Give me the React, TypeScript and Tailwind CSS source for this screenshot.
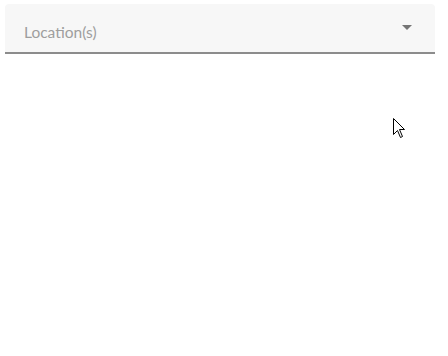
import React from 'react';

const Cursor: React.FC = () => (
  <svg
    className="absolute left-[393px] top-[118px]"
    width="13"
    height="21"
    viewBox="0 0 13 21"
  >
    <path
      d="M0.5 0.5 L0.5 16.5 L4.5 12.5 L7.5 19.5 L9.5 18.5 L6.5 11.5 L11.5 11.5 Z"
      fill="#ffffff"
      stroke="#000000"
      strokeWidth="1"
      strokeLinejoin="miter"
    />
  </svg>
);

export default function App() {
  return (
    <div className="relative w-[448px] h-[356px] bg-white" style={{ fontFamily: 'Lato, "Open Sans", sans-serif' }}>
      <div className="pl-[5px] pr-[13px] pt-[4px]">
        <div className="flex items-center h-[50px] bg-[#f7f7f7] rounded-t-[4px] border-b-2 border-[#8c8c8c] pl-[19px] pr-[23px] cursor-pointer">
          <span className="flex-1 text-[15.5px] text-[#9e9e9e] pt-[9px]">Location(s)</span>
          <svg width="10" height="5" viewBox="0 0 10 5" className="mt-[-2px]">
            <path d="M0 0 L10 0 L5 5 Z" fill="#757575" />
          </svg>
        </div>
      </div>
      <Cursor />
    </div>
  );
}
